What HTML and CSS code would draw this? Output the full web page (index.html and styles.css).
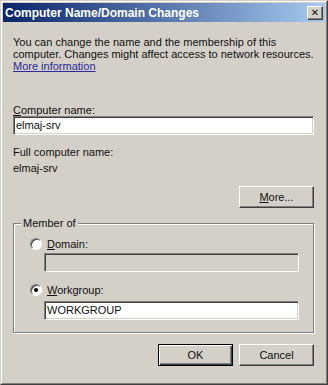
FILE: index.html
```html
<!DOCTYPE html>
<html lang="en">
<head>
  <meta charset="UTF-8">
  <title>Computer Name/Domain Changes</title>
  <link rel="stylesheet" href="styles.css">
</head>
<body>
  <div class="window">
    <div class="frame">
      <div class="titlebar">
        <span class="title">Computer Name/Domain Changes</span>
        <span class="close">&#x2715;</span>
      </div>

      <div class="content">
        <p class="intro">
          You can change the name and the membership of this<br>
          computer. Changes might affect access to network resources.<br>
          <a href="#" class="link">More information</a>
        </p>

        <label class="label first"><u>C</u>omputer name:</label>
        <div class="textbox">elmaj-srv</div>

        <div class="label full">Full computer name:</div>
        <div class="label value">elmaj-srv</div>

        <div class="right-row">
          <button class="btn"><u>M</u>ore...</button>
        </div>

        <div class="group">
          <span class="group-label">Member of</span>
          <div class="radio-row domain">
            <span class="radio"></span>
            <span><u>D</u>omain:</span>
          </div>
          <div class="textbox inner disabled"></div>
          <div class="radio-row workgroup">
            <span class="radio checked"></span>
            <span><u>W</u>orkgroup:</span>
          </div>
          <div class="textbox inner">WORKGROUP</div>
        </div>

        <div class="buttons">
          <button class="btn default">OK</button>
          <button class="btn">Cancel</button>
        </div>
      </div>
    </div>
  </div>
</body>
</html>
```

FILE: styles.css
```css
body {
  margin: 0;
  background-color: #ffffff;
  font-family: "Liberation Sans", Arial, sans-serif;
  font-size: 11px;
  color: #111;
}

.window {
  width: 328px;
  height: 385px;
  box-sizing: border-box;
  border: 1px solid;
  border-color: #d4d0c8 #404040 #404040 #d4d0c8;
  background-color: #d4d0c8;
}

.frame {
  height: 100%;
  box-sizing: border-box;
  border: 1px solid;
  border-color: #ffffff #808080 #808080 #ffffff;
  padding: 1px;
}

.titlebar {
  height: 19px;
  display: flex;
  align-items: center;
  justify-content: space-between;
  padding: 0 2px 0 2px;
  background: linear-gradient(to right, #0a246a, #a6caf0);
}

.title {
  color: #fff;
  font-weight: bold;
  font-size: 12px;
}

.close {
  width: 14px;
  height: 12px;
  display: flex;
  align-items: center;
  justify-content: center;
  background-color: #d4d0c8;
  border: 1px solid;
  border-color: #fff #404040 #404040 #fff;
  box-shadow: inset -1px -1px #808080;
  font-size: 10px;
  font-weight: bold;
  line-height: 1;
  font-family: "DejaVu Sans", sans-serif;
}

.content {
  padding: 0 11px 0 10px;
}

.intro {
  margin: 14px 0 0 0;
  line-height: 12px;
}

.link {
  color: #2a2a9a;
}

.label {
  display: block;
  line-height: 12px;
}

.first {
  margin-top: 32px;
}

.textbox {
  height: 17px;
  line-height: 17px;
  padding: 0 2px;
  background-color: #fff;
  border: 1px solid;
  border-color: #808080 #fff #fff #808080;
  box-shadow: inset 1px 1px #404040, inset -1px -1px #d4d0c8;
}

.textbox.disabled {
  background-color: #d4d0c8;
}

.full {
  margin-top: 11px;
}

.value {
  margin-top: 4px;
}

.right-row {
  display: flex;
  justify-content: flex-end;
  margin-top: 12px;
}

.btn {
  width: 75px;
  height: 22px;
  padding: 0;
  font-family: inherit;
  font-size: 11px;
  color: #111;
  background-color: #d4d0c8;
  border: 1px solid;
  border-color: #fff #404040 #404040 #fff;
  box-shadow: inset -1px -1px #808080;
}

.btn.default {
  border: 1px solid #000;
  box-shadow: inset 1px 1px #fff, inset -1px -1px #404040, inset -2px -2px #808080;
}

.group {
  position: relative;
  margin-top: 15px;
  height: 108px;
  border: 1px solid #808080;
  box-shadow: inset 1px 1px #fff, 1px 1px #fff;
  padding: 0 14px 0 30px;
}

.group-label {
  position: absolute;
  top: -7px;
  left: 7px;
  padding: 0 2px;
  line-height: 12px;
  background-color: #d4d0c8;
}

.radio-row {
  display: flex;
  align-items: center;
  gap: 5px;
  height: 13px;
  margin-left: -14px;
}

.domain {
  margin-top: 13px;
}

.workgroup {
  margin-top: 11px;
  margin-bottom: 5px;
}

.inner {
  margin-top: 3px;
}

.radio {
  position: relative;
  width: 10px;
  height: 10px;
  border-radius: 50%;
  border: 1px solid;
  border-color: #808080 #fff #fff #808080;
  box-shadow: inset 1px 1px #404040;
  background-color: #fff;
}

.radio.checked::after {
  content: "";
  position: absolute;
  left: 3px;
  top: 3px;
  width: 4px;
  height: 4px;
  border-radius: 50%;
  background-color: #000;
}

.buttons {
  display: flex;
  justify-content: flex-end;
  gap: 6px;
  margin-top: 11px;
}
```
